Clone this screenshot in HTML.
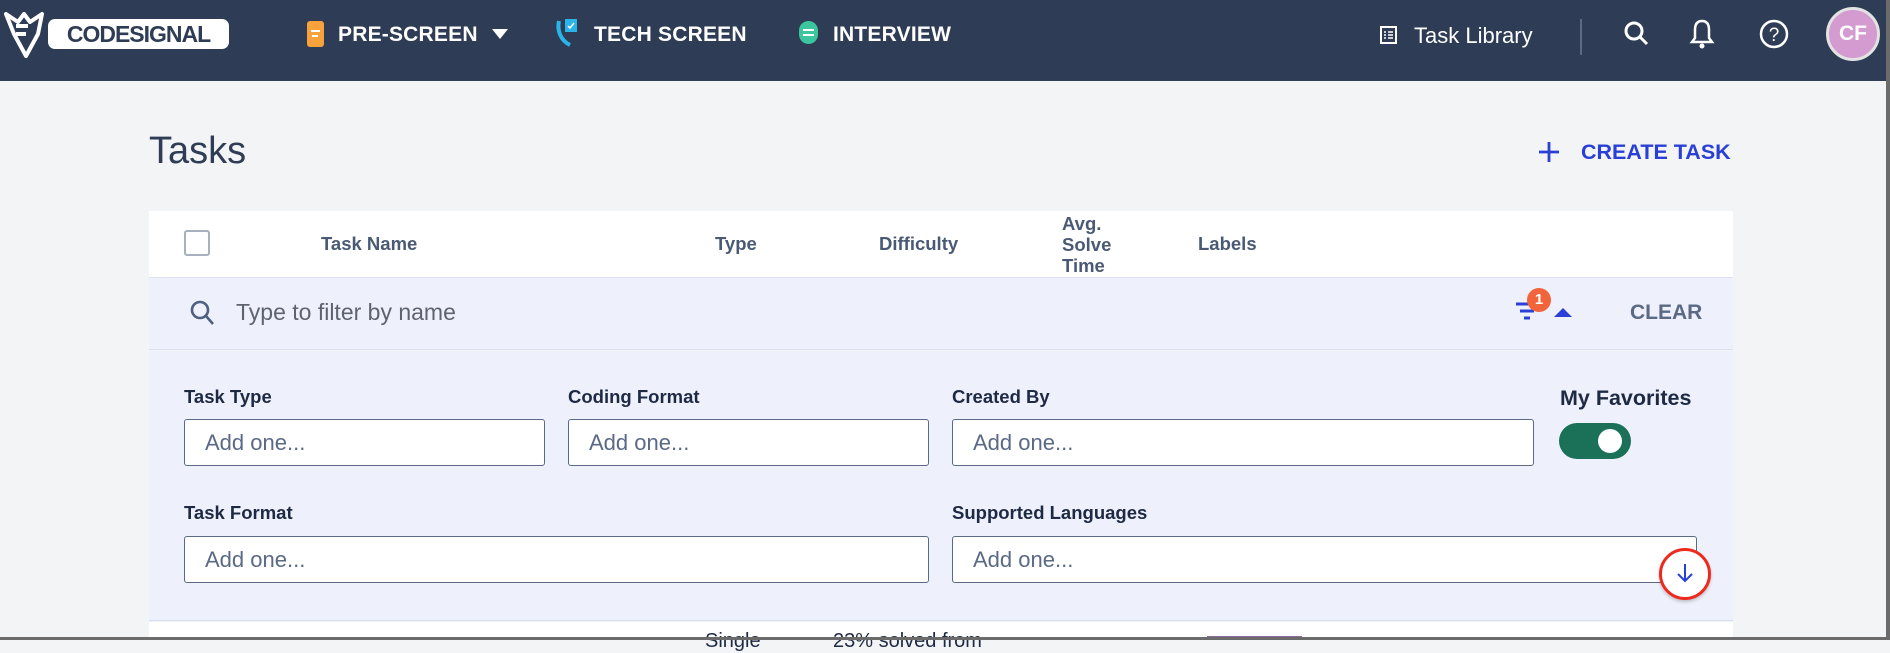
<!DOCTYPE html>
<html><head><meta charset="utf-8"><style>
*{box-sizing:border-box;margin:0;padding:0}
body{width:1890px;height:640px;overflow:hidden;background:#f3f4f6;font-family:"Liberation Sans",sans-serif;position:relative;color:#1e2a44}
.a{position:absolute}
.nav{left:0;top:0;width:1890px;height:81px;background:#2e3d55}
.ni{color:#fff;font-weight:bold;font-size:21px;top:23px;letter-spacing:.2px}
.hd{font-weight:bold;font-size:18.5px;color:#4a5a75}
.lb{font-weight:bold;font-size:18.5px;color:#1e2a44}
.in{background:#fff;border:1.5px solid #5a6a85;border-radius:3px;color:#5a6a85;font-size:22px;padding-left:20px;display:flex;align-items:center}
</style></head><body>
<div class="a nav"></div>
<!-- logo -->
<svg class="a" style="left:4px;top:10px" width="60" height="50" viewBox="0 0 60 50"><path d="M2 4 L14 12 L20 4 L26 12 L38 4 L34 24 L22 46 L10 24 Z" fill="none" stroke="#fff" stroke-width="4" stroke-linejoin="round"/><path d="M12 16 h12 M12 24 h10" stroke="#fff" stroke-width="4"/></svg>
<div class="a" style="left:48px;top:19px;width:181px;height:30px;background:#fff;border-radius:7px;color:#2e3d55;font-weight:bold;font-size:23px;line-height:30px;text-align:center;letter-spacing:-1px">CODESIGNAL</div>
<!-- pre-screen -->
<div class="a" style="left:307px;top:21px;width:17px;height:26px;background:#f7a23a;border-radius:3px"></div>
<div class="a" style="left:311px;top:30px;width:9px;height:2px;background:#fff"></div>
<div class="a" style="left:312px;top:35px;width:6px;height:2px;background:#fff"></div>
<div class="a ni" style="left:338px">PRE-SCREEN</div>
<div class="a" style="left:492px;top:29px;width:0;height:0;border-left:8px solid transparent;border-right:8px solid transparent;border-top:10px solid #fff"></div>
<!-- tech -->
<svg class="a" style="left:556px;top:18px" width="24" height="30" viewBox="0 0 24 30"><path d="M3 3 C1 12 4 22 14 27" stroke="#2ab4e8" stroke-width="4" fill="none"/><rect x="9" y="1" width="12" height="13" fill="#2ab4e8"/><path d="M12 8 l2 2 l4 -5" stroke="#fff" stroke-width="1.5" fill="none"/></svg>
<div class="a ni" style="left:594px">TECH SCREEN</div>
<!-- interview -->
<div class="a" style="left:799px;top:21px;width:19px;height:23px;background:#3cc6a0;border-radius:10px"></div>
<div class="a" style="left:803px;top:29px;width:11px;height:2px;background:#fff"></div>
<div class="a" style="left:803px;top:34px;width:11px;height:2px;background:#fff"></div>
<div class="a ni" style="left:833px">INTERVIEW</div>
<!-- right nav -->
<svg class="a" style="left:1380px;top:26px" width="17" height="18" viewBox="0 0 17 18"><rect x="1" y="1" width="15" height="16" fill="none" stroke="#fff" stroke-width="2"/><path d="M4 6h2M8 6h5M4 9h2M8 9h5M4 12h2M8 12h5" stroke="#fff" stroke-width="1.6"/></svg>
<div class="a" style="left:1414px;top:23px;color:#fff;font-size:22px">Task Library</div>
<div class="a" style="left:1580px;top:19px;width:2px;height:36px;background:#5a6a85"></div>
<svg class="a" style="left:1622px;top:19px" width="30" height="30" viewBox="0 0 30 30"><circle cx="12" cy="12" r="8" fill="none" stroke="#fff" stroke-width="3"/><path d="M18 18 L25 25" stroke="#fff" stroke-width="3"/></svg>
<svg class="a" style="left:1688px;top:18px" width="28" height="32" viewBox="0 0 28 32"><path d="M14 3 C8 3 7 8 7 12 L7 20 L4 24 L24 24 L21 20 L21 12 C21 8 20 3 14 3Z" fill="none" stroke="#fff" stroke-width="2.5"/><circle cx="14" cy="28" r="2.5" fill="#fff"/></svg>
<svg class="a" style="left:1758px;top:18px" width="32" height="32" viewBox="0 0 32 32"><circle cx="16" cy="16" r="13" fill="none" stroke="#fff" stroke-width="2.5"/><text x="16" y="23" font-family="Liberation Sans" font-size="19" fill="#fff" text-anchor="middle">?</text></svg>
<div class="a" style="left:1826px;top:7px;width:54px;height:54px;border-radius:50%;background:#d39bcf;border:3px solid #e3e3e3;color:#fff;font-weight:bold;font-size:21px;line-height:48px;text-align:center">CF</div>
<!-- title -->
<div class="a" style="left:149px;top:130px;font-size:38px;color:#2e3d55">Tasks</div>
<svg class="a" style="left:1538px;top:141px" width="22" height="22"><path d="M11 1v20M1 11h20" stroke="#2a3fd6" stroke-width="2.8"/></svg>
<div class="a" style="left:1581px;top:140px;font-weight:bold;font-size:21.5px;color:#2a3fd6">CREATE TASK</div>
<!-- table header -->
<div class="a" style="left:149px;top:211px;width:1584px;height:67px;background:#fff;border-bottom:1px solid #dde1f2"></div>
<div class="a" style="left:184px;top:230px;width:26px;height:26px;border:2px solid #a9b0bd;border-radius:3px"></div>
<div class="a hd" style="left:321px;top:233px">Task Name</div>
<div class="a hd" style="left:715px;top:233px">Type</div>
<div class="a hd" style="left:879px;top:233px">Difficulty</div>
<div class="a hd" style="left:1062px;top:213px;line-height:21px">Avg.<br>Solve<br>Time</div>
<div class="a hd" style="left:1198px;top:233px">Labels</div>
<!-- filter row -->
<div class="a" style="left:149px;top:278px;width:1584px;height:72px;background:#eef0fb;border-bottom:1.5px solid #dde1f2"></div>
<svg class="a" style="left:188px;top:298px" width="30" height="30" viewBox="0 0 30 30"><circle cx="12" cy="12" r="8" fill="none" stroke="#4f6080" stroke-width="2.6"/><path d="M18 18 L25 26" stroke="#4f6080" stroke-width="2.6"/></svg>
<div class="a" style="left:236px;top:299px;font-size:23px;color:#5d6470">Type to filter by name</div>
<svg class="a" style="left:1514px;top:300px" width="26" height="24"><path d="M2 4h22M6 11h14M10 18h6" stroke="#2a3fd6" stroke-width="3"/></svg>
<div class="a" style="left:1527px;top:288px;width:24px;height:24px;border-radius:50%;background:#f2643c;color:#fff;font-weight:bold;font-size:15px;line-height:24px;text-align:center">1</div>
<div class="a" style="left:1554px;top:308px;width:0;height:0;border-left:9px solid transparent;border-right:9px solid transparent;border-bottom:9px solid #2a3fd6"></div>
<div class="a" style="left:1630px;top:301px;font-weight:bold;font-size:21px;color:#5a6a85">CLEAR</div>
<!-- filter panel -->
<div class="a" style="left:149px;top:351px;width:1584px;height:270px;background:#eef0fb;border-bottom:1.5px solid #d6dcf2"></div>
<div class="a lb" style="left:184px;top:386px">Task Type</div>
<div class="a lb" style="left:568px;top:386px">Coding Format</div>
<div class="a lb" style="left:952px;top:386px">Created By</div>
<div class="a" style="left:1560px;top:386px;font-weight:bold;font-size:21.5px;color:#1e2a44">My Favorites</div>
<div class="a in" style="left:184px;top:419px;width:361px;height:47px">Add one...</div>
<div class="a in" style="left:568px;top:419px;width:361px;height:47px">Add one...</div>
<div class="a in" style="left:952px;top:419px;width:582px;height:47px">Add one...</div>
<div class="a" style="left:1559px;top:423px;width:72px;height:36px;border-radius:18px;background:#1b7058"></div>
<div class="a" style="left:1598px;top:429px;width:24px;height:24px;border-radius:50%;background:#fff"></div>
<div class="a lb" style="left:184px;top:502px">Task Format</div>
<div class="a lb" style="left:952px;top:502px">Supported Languages</div>
<div class="a in" style="left:184px;top:536px;width:745px;height:47px">Add one...</div>
<div class="a in" style="left:952px;top:536px;width:745px;height:47px">Add one...</div>
<div class="a" style="left:1659px;top:548px;width:52px;height:52px;border-radius:50%;background:#fff;border:3.5px solid #ee2a1e;box-shadow:0 2px 3px rgba(0,0,0,.2)"></div>
<svg class="a" style="left:1675px;top:562px" width="20" height="22"><path d="M10 2v17M3 12l7 7 7-7" stroke="#2a3fd6" stroke-width="2" fill="none"/></svg>
<!-- bottom row -->
<div class="a" style="left:149px;top:622px;width:1584px;height:18px;background:#fff"></div>
<div class="a" style="left:705px;top:630px;font-size:20px;color:#1e2a44">Single</div>
<div class="a" style="left:833px;top:630px;font-size:20px;color:#1e2a44">23% solved from</div>
<div class="a" style="left:1207px;top:636px;width:95px;height:4px;background:#8a6a9a"></div>
<div class="a" style="left:1886px;top:0;width:4px;height:640px;background:#6b6b6b"></div>
<div class="a" style="left:0;top:637px;width:1890px;height:3px;background:#6b6b6b"></div>
</body></html>
